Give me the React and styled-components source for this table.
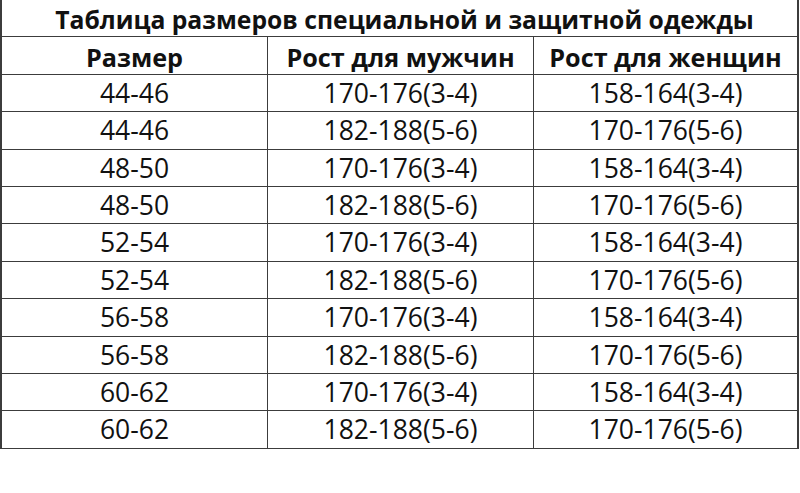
import React from 'react'
import styled, { createGlobalStyle } from 'styled-components'

const GlobalStyle = createGlobalStyle`
  body {
    margin: 0;
    background: #fff;
    font-family: "Open Sans", "Noto Sans", sans-serif;
    color: #111;
  }
`

const Table = styled.div`
  display: grid;
  grid-template-columns: 266px 266px 265px;
  grid-auto-rows: 37.4px;
  width: 797px;
  border-left: 2px solid #3c3c3c;
  box-sizing: border-box;
`

const Cell = styled.div`
  box-sizing: border-box;
  overflow: hidden;
  text-align: center;
  white-space: nowrap;
  border-bottom: 1px solid #3c3c3c;
  border-right: ${props => (props.last ? 2 : 1)}px solid #3c3c3c;
  font-size: ${props => props.size || 26.5}px;
  font-weight: ${props => (props.bold ? 700 : 400)};
  line-height: 37px;
  padding-top: ${props => props.shift || 0}px;
  ${props => props.span && 'grid-column: 1 / -1; padding-left: 10px;'}
`

const rows = [
  ['44-46', '170-176(3-4)', '158-164(3-4)'],
  ['44-46', '182-188(5-6)', '170-176(5-6)'],
  ['48-50', '170-176(3-4)', '158-164(3-4)'],
  ['48-50', '182-188(5-6)', '170-176(5-6)'],
  ['52-54', '170-176(3-4)', '158-164(3-4)'],
  ['52-54', '182-188(5-6)', '170-176(5-6)'],
  ['56-58', '170-176(3-4)', '158-164(3-4)'],
  ['56-58', '182-188(5-6)', '170-176(5-6)'],
  ['60-62', '170-176(3-4)', '158-164(3-4)'],
  ['60-62', '182-188(5-6)', '170-176(5-6)']
]

const headers = ['Размер', 'Рост для мужчин', 'Рост для женщин']

export default function App() {
  return (
    <>
      <GlobalStyle />
      <Table>
        <Cell bold span last size={24.7} shift={1}>
          Таблица размеров специальной и защитной одежды
        </Cell>
        {headers.map((h, i) => (
          <Cell key={h} bold last={i === 2} size={25.2} shift={2}>
            {h}
          </Cell>
        ))}
        {rows.map((row, r) =>
          row.map((v, i) => (
            <Cell key={r + '-' + i} last={i === 2}>
              {v}
            </Cell>
          ))
        )}
      </Table>
    </>
  )
}
